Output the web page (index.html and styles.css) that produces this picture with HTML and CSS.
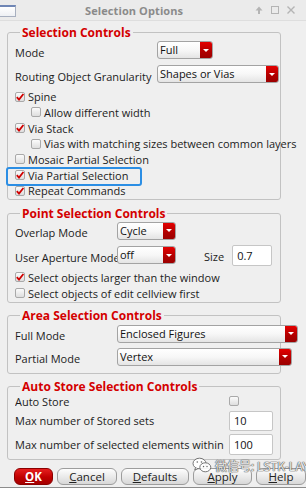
FILE: index.html
```html
<!DOCTYPE html>
<html>
<head>
<meta charset="utf-8">
<title>Selection Options</title>
<link rel="stylesheet" href="styles.css">
</head>
<body>
<div class="window">
  <div class="titlebar">
    <div class="win-icon"></div>
    <div class="title">Selection Options</div>
    <div class="wm-buttons">
      <svg class="wm-up" width="8" height="8" viewBox="0 0 8 8"><path d="M4 0.5 L7.5 4.5 H5 V8 H3 V4.5 H0.5 Z" fill="#b4b4b4"/></svg>
      <svg class="wm-max" width="8" height="8" viewBox="0 0 8 8"><rect x="0.5" y="0.5" width="7" height="7" fill="none" stroke="#b4b4b4" stroke-width="1"/></svg>
      <svg class="wm-close" width="8" height="8" viewBox="0 0 8 8"><path d="M0.5 0.5 L7.5 7.5 M7.5 0.5 L0.5 7.5" stroke="#b4b4b4" stroke-width="1.4"/></svg>
    </div>
  </div>

  <div class="main">
    <div class="group g1">
      <div class="group-title">Selection Controls</div>
      <div class="form-row g1-row first">
        <span class="label">Mode</span>
        <div class="combo w-full"><span class="combo-text">Full</span><span class="combo-arrow"><i></i></span></div>
      </div>
      <div class="form-row g1-row second">
        <span class="label">Routing Object Granularity</span>
        <div class="combo w-routing"><span class="combo-text">Shapes or Vias</span><span class="combo-arrow"><i></i></span></div>
      </div>
      <div class="checks g1-checks">
        <div class="check-row"><span class="cb checked"><svg viewBox="0 0 10 10"><path d="M1.8 5.2 L4 7.6 L8.4 2" /></svg></span>Spine</div>
        <div class="check-row indent"><span class="cb"></span>Allow different width</div>
        <div class="check-row"><span class="cb checked"><svg viewBox="0 0 10 10"><path d="M1.8 5.2 L4 7.6 L8.4 2" /></svg></span>Via Stack</div>
        <div class="check-row indent"><span class="cb"></span>Vias with matching sizes between common layers</div>
        <div class="check-row"><span class="cb"></span>Mosaic Partial Selection</div>
        <div class="check-row"><span class="cb checked"><svg viewBox="0 0 10 10"><path d="M1.8 5.2 L4 7.6 L8.4 2" /></svg></span>Via Partial Selection</div>
        <div class="check-row"><span class="cb checked"><svg viewBox="0 0 10 10"><path d="M1.8 5.2 L4 7.6 L8.4 2" /></svg></span>Repeat Commands</div>
      </div>
    </div>

    <div class="group g2">
      <div class="group-title">Point Selection Controls</div>
      <div class="form-row g2-row first">
        <span class="label">Overlap Mode</span>
        <div class="combo w-cycle"><span class="combo-text">Cycle</span><span class="combo-arrow"><i></i></span></div>
      </div>
      <div class="form-row g2-row aperture">
        <span class="label">User Aperture Mode</span>
        <div class="combo w-cycle"><span class="combo-text">off</span><span class="combo-arrow"><i></i></span></div>
        <span class="size-label">Size</span>
        <div class="field w-size">0.7</div>
      </div>
      <div class="checks g2-checks">
        <div class="check-row"><span class="cb checked"><svg viewBox="0 0 10 10"><path d="M1.8 5.2 L4 7.6 L8.4 2" /></svg></span>Select objects larger than the window</div>
        <div class="check-row"><span class="cb"></span>Select objects of edit cellview first</div>
      </div>
    </div>

    <div class="group g3">
      <div class="group-title">Area Selection Controls</div>
      <div class="form-row g2-row g3-first">
        <span class="label">Full Mode</span>
        <div class="combo w-enclosed"><span class="combo-text">Enclosed Figures</span><span class="combo-arrow"><i></i></span></div>
      </div>
      <div class="form-row g2-row g3-second">
        <span class="label">Partial Mode</span>
        <div class="combo w-vertex"><span class="combo-text">Vertex</span><span class="combo-arrow"><i></i></span></div>
      </div>
    </div>

    <div class="group g4">
      <div class="group-title">Auto Store Selection Controls</div>
      <div class="g4-row r-auto">
        <span class="g4-label">Auto Store</span>
        <span class="cb"></span>
      </div>
      <div class="g4-row r-field">
        <span class="g4-label">Max number of Stored sets</span>
        <div class="field w-store h20">10</div>
      </div>
      <div class="g4-row r-field">
        <span class="g4-label">Max number of selected elements within</span>
        <div class="field w-store">100</div>
      </div>
    </div>

    <div class="buttons">
      <div class="btn ok"><u>O</u>K</div>
      <div class="btn w-cancel"><u>C</u>ancel</div>
      <div class="btn w-defaults"><u>D</u>efaults</div>
      <div class="btn w-apply"><u>A</u>pply</div>
      <div class="btn w-help"><u>H</u>elp</div>
    </div>
  </div>

  <div class="highlight"></div>

  <div class="watermark">
    <svg width="20" height="17" viewBox="0 0 20 17">
      <ellipse cx="7.5" cy="6.5" rx="6.5" ry="5.3" fill="rgba(255,255,255,0.9)" stroke="#666" stroke-width="0.9"/>
      <path d="M3.5 10.5 L2.8 13 L6 11.5" fill="rgba(255,255,255,0.9)" stroke="#666" stroke-width="0.9"/>
      <ellipse cx="13.3" cy="10.3" rx="5.5" ry="4.5" fill="rgba(255,255,255,0.9)" stroke="#666" stroke-width="0.9"/>
      <circle cx="5.3" cy="5" r="0.8" fill="#666"/>
      <circle cx="9.5" cy="5" r="0.8" fill="#666"/>
      <circle cx="11.5" cy="9.5" r="0.7" fill="#666"/>
      <circle cx="15" cy="9.5" r="0.7" fill="#666"/>
    </svg>
    <span>微信号: LSTK-LAY</span>
  </div>
</div>
</body>
</html>
```

FILE: styles.css
```css
html, body {
  margin: 0;
  padding: 0;
  background: #ffffff;
}

.window {
  position: relative;
  width: 306px;
  height: 488px;
  background: #efefef;
  border-bottom: 1px solid #8c8c8c;
  box-sizing: border-box;
  overflow: hidden;
  font-family: "Open Sans", "Noto Sans", sans-serif;
  font-size: 11px;
  color: #1c1c1c;
}

/* ---------- title bar ---------- */
.titlebar {
  height: 21px;
  box-sizing: border-box;
  border-bottom: 1px solid #dedede;
  background: #ebebeb;
  display: flex;
  align-items: center;
}

.win-icon {
  width: 16px;
  height: 12px;
  margin-top: 1px;
  box-sizing: border-box;
  background: linear-gradient(#ffffff, #eef0f4);
  border: 1px solid #a7afbf;
  border-top: 2px solid #6f86b5;
  border-left: none;
}

.title {
  margin-left: 69px;
  font-weight: bold;
  font-size: 11px;
  color: #8a8a8a;
  letter-spacing: 0.1px;
}

.wm-buttons {
  margin-left: auto;
  margin-right: 11px;
  display: flex;
  align-items: center;
  gap: 8px;
}

.wm-buttons svg {
  display: block;
}

/* ---------- main ---------- */
.main {
  padding: 11px 0 0 7px;
}

.group {
  width: 274px;
  box-sizing: border-box;
  border: 1px solid #c2c2c2;
  border-radius: 3px;
  padding: 0 0 0 7px;
}

.group-title {
  margin: -8px 0 0 5px;
  padding: 0 2px;
  width: max-content;
  background: #efefef;
  font-weight: bold;
  font-size: 12px;
  line-height: 15px;
  color: #d40000;
}

.g2 { margin-top: 13px; }
.g3 { margin-top: 12px; }
.g4 { margin-top: 12px; }

.form-row {
  display: flex;
  align-items: center;
  white-space: nowrap;
}

.label {
  padding-top: 4px;
  flex: none;
}

.g1-row .label { width: 142px; }
.g2-row .label { width: 102px; }

.g1-row.first { margin-top: 1px; height: 18px; }
.g1-row.second { margin-top: 6px; height: 18px; }
.g1-checks { margin-top: 6px; }

.g2-row.first { margin-top: 1px; height: 18px; }
.g2-row.aperture { margin-top: 5px; height: 21px; }
.g2-checks { margin-top: 4px; padding-bottom: 1px; }

.g3-first { margin-top: 2px; height: 18px; }
.g3-second { margin-top: 5px; height: 18px; }
.g3 { padding-bottom: 7px; }

/* ---------- combo box ---------- */
.combo {
  flex: none;
  height: 18px;
  box-sizing: border-box;
  border: 1px solid #a3a3a3;
  border-radius: 3px;
  background: linear-gradient(#ffffff 0%, #f7f7f7 50%, #e4e4e4 100%);
  display: flex;
  overflow: hidden;
}

.combo-text {
  flex: 1;
  padding-left: 2px;
  line-height: 15px;
  color: #111;
}

.combo-arrow {
  width: 12px;
  flex: none;
  background: linear-gradient(#e40000, #b00000 60%, #9c0000);
  display: flex;
  align-items: center;
  justify-content: center;
}

.combo-arrow i {
  display: block;
  width: 0;
  height: 0;
  border-left: 3px solid transparent;
  border-right: 3px solid transparent;
  border-top: 3px solid #ffffff;
}

.w-full { width: 56px; }
.w-routing { width: 122px; }
.w-cycle { width: 59px; }
.w-enclosed { width: 181px; }
.w-vertex { width: 175px; }

/* ---------- text fields ---------- */
.field {
  flex: none;
  height: 21px;
  box-sizing: border-box;
  border: 1px solid #c6c6c6;
  border-radius: 2px;
  background: #ffffff;
  padding-left: 4px;
  line-height: 19px;
  color: #111;
}

.field.h20 { height: 20px; line-height: 18px; }

.size-label {
  margin-left: 28px;
  padding-top: 2px;
}

.w-size {
  width: 40px;
  margin-left: 8px;
}

.w-store { width: 44px; }

/* ---------- checkboxes ---------- */
.check-row {
  height: 15.67px;
  display: flex;
  align-items: center;
  gap: 3px;
  white-space: nowrap;
}

.check-row.indent { padding-left: 16px; }

.cb {
  flex: none;
  width: 10px;
  height: 10px;
  box-sizing: border-box;
  border: 1px solid #a9a9a9;
  border-radius: 2px;
  background: linear-gradient(#fbfbfb, #dedede);
  position: relative;
}

.cb svg {
  position: absolute;
  left: -1px;
  top: -1px;
  width: 10px;
  height: 10px;
}

.cb svg path {
  fill: none;
  stroke: #d00000;
  stroke-width: 1.8;
}

/* ---------- auto store group ---------- */
.g4 { padding-bottom: 2px; }

.g4-row {
  display: flex;
  align-items: center;
  white-space: nowrap;
}

.g4-label {
  width: 214px;
  flex: none;
  overflow: hidden;
}

.r-auto { height: 15px; }
.r-field { height: 24px; }

/* ---------- buttons ---------- */
.buttons {
  margin: 8px 0 0 7px;
  display: flex;
  gap: 4px;
}

.btn {
  flex: none;
  height: 17px;
  box-sizing: border-box;
  border: 1px solid #9d9d9d;
  border-radius: 6px;
  background: linear-gradient(#fdfdfd, #e9e9e9 55%, #d8d8d8);
  text-align: center;
  line-height: 15px;
  color: #222;
  font-size: 11.5px;
}

.btn u { text-decoration-thickness: 1px; text-underline-offset: 1px; }

.btn.ok {
  width: 39px;
  border-color: #8a0000;
  background: linear-gradient(#e61e1e, #c00000 55%, #a50000);
  color: #ffffff;
  font-weight: bold;
}

.w-cancel { width: 60px; }
.w-defaults { width: 68px; }
.w-apply { width: 59px; }
.w-help { width: 50px; }

/* ---------- overlays ---------- */
.highlight {
  position: absolute;
  left: 6px;
  top: 167px;
  width: 136px;
  height: 19px;
  box-sizing: border-box;
  border: 2px solid #2b8ee4;
  border-radius: 3px;
}

.watermark {
  position: absolute;
  left: 192px;
  top: 457px;
  display: flex;
  align-items: center;
  gap: 3px;
  font-family: "Noto Sans CJK SC", sans-serif;
  font-size: 12px;
  color: rgba(255, 255, 255, 0.9);
  text-shadow: 0 0 1px #555, 0 0 1px #555, 0 0 1px #555;
  white-space: nowrap;
}
```
